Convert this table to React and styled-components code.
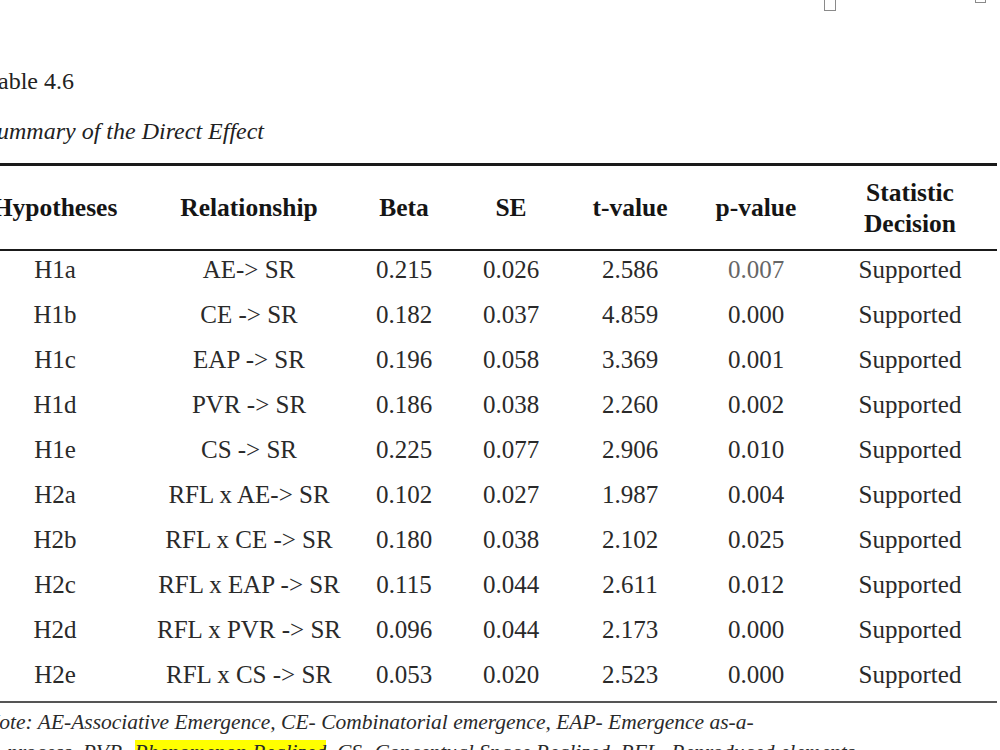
import React from 'react'
import styled, { createGlobalStyle } from 'styled-components'

const GlobalStyle = createGlobalStyle`
    html, body {
        margin: 0;
        padding: 0;
        background: #ffffff;
        overflow: hidden;
    }
    body {
        font-family: "Liberation Serif", "Times New Roman", serif;
        color: #222;
    }
`

const Page = styled.div`
    position: relative;
    width: 1000px;
    height: 750px;
    overflow: hidden;
`

const Sheet = styled.div`
    margin-left: -15px;
    padding-top: 66px;
`

// word's little table handles at the top of the view
const Handle = styled.span`
    position: absolute;
    top: ${p => p.top}px;
    left: ${p => p.left}px;
    width: ${p => p.w}px;
    height: ${p => p.h}px;
    border: 1px solid #8a8a8a;
    box-sizing: border-box;
`

const Caption = styled.div`
    font-size: 24px;
    line-height: 30px;
    color: #222;
`

const CaptionTitle = styled(Caption)`
    margin-bottom: 20px;
`

const CaptionSub = styled(Caption)`
    font-style: italic;
    margin-bottom: 17px;
`

const Table = styled.div`
    width: 1012px;
    border-top: 3px solid #1a1a1a;
    border-bottom: 2px solid #555;
`

const Row = styled.div`
    display: grid;
    grid-template-columns: 140px 248px 62px 152px 86px 166px 142px;
    height: ${p => p.head ? '83px' : '45px'};
    align-items: ${p => p.head ? 'center' : 'start'};
    border-bottom: ${p => p.head ? '2px solid #1a1a1a' : 'none'};
`

const Cell = styled.div`
    text-align: center;
    white-space: nowrap;
    font-size: 25px;
    line-height: 38px;
    color: ${p => p.light ? '#666' : '#2a2a2a'};
    display: flex;
    justify-content: center;
`

const HeadCell = styled.div`
    text-align: center;
    white-space: nowrap;
    font-size: 25.5px;
    font-weight: bold;
    line-height: 31px;
    color: #151515;
    display: flex;
    justify-content: center;
`

const Note = styled.div`
    width: 1040px;
    padding-top: 4px;
    white-space: nowrap;
    font-style: italic;
    font-size: 21.5px;
    line-height: 30px;
    color: #2a2a2a;
`

const Indent = styled.span`
    padding-left: 22px;
`

const Mark = styled.span`
    background: #ffff00;
`

const rows = [
    ['H1a', 'AE-> SR', '0.215', '0.026', '2.586', '0.007', 'Supported'],
    ['H1b', 'CE -> SR', '0.182', '0.037', '4.859', '0.000', 'Supported'],
    ['H1c', 'EAP -> SR', '0.196', '0.058', '3.369', '0.001', 'Supported'],
    ['H1d', 'PVR -> SR', '0.186', '0.038', '2.260', '0.002', 'Supported'],
    ['H1e', 'CS -> SR', '0.225', '0.077', '2.906', '0.010', 'Supported'],
    ['H2a', 'RFL x AE-> SR', '0.102', '0.027', '1.987', '0.004', 'Supported'],
    ['H2b', 'RFL x CE -> SR', '0.180', '0.038', '2.102', '0.025', 'Supported'],
    ['H2c', 'RFL x EAP -> SR', '0.115', '0.044', '2.611', '0.012', 'Supported'],
    ['H2d', 'RFL x PVR -> SR', '0.096', '0.044', '2.173', '0.000', 'Supported'],
    ['H2e', 'RFL x CS -> SR', '0.053', '0.020', '2.523', '0.000', 'Supported'],
]

const App = () => {
    return (
        <Page>
            <GlobalStyle />
            <Handle top={-1} left={824} w={12} h={12} />
            <Handle top={-8} left={975} w={11} h={11} />
            <Sheet>
                <CaptionTitle>Table 4.6</CaptionTitle>
                <CaptionSub>Summary of the Direct Effect</CaptionSub>

                <Table>
                    <Row head>
                        <HeadCell>Hypotheses</HeadCell>
                        <HeadCell>Relationship</HeadCell>
                        <HeadCell>Beta</HeadCell>
                        <HeadCell>SE</HeadCell>
                        <HeadCell>t-value</HeadCell>
                        <HeadCell>p-value</HeadCell>
                        <HeadCell>Statistic<br />Decision</HeadCell>
                    </Row>
                    {rows.map((r, i) => (
                        <Row key={r[0]}>
                            {r.map((v, j) => (
                                <Cell key={j} light={i === 0 && j === 5}>{v}</Cell>
                            ))}
                        </Row>
                    ))}
                </Table>

                <Note>
                    Note: AE-Associative Emergence, CE- Combinatorial emergence, EAP- Emergence as-a-<br />
                    <Indent>process, PVR- </Indent><Mark>Phenomenon Realized</Mark>, CS- Conceptual Space Realized, RFL- Reproduced elements
                </Note>
            </Sheet>
        </Page>
    )
}

export default App
